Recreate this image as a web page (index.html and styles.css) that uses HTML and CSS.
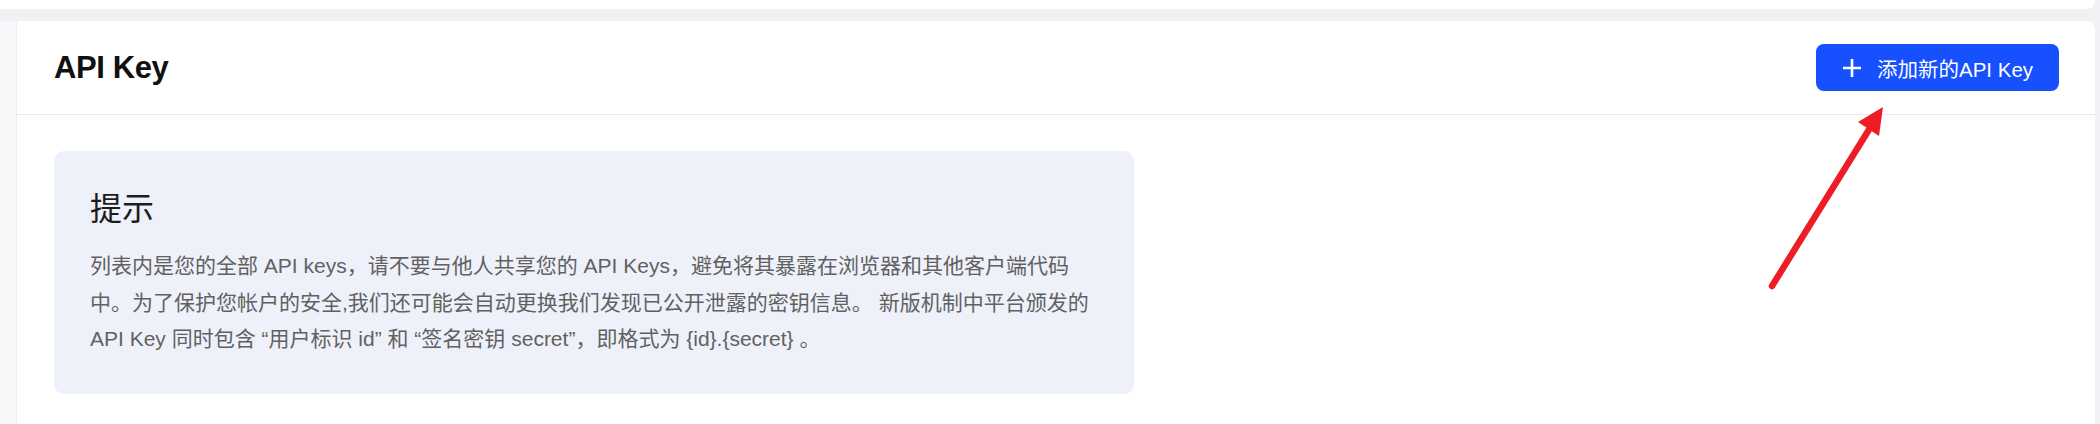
FILE: index.html
```html
<!DOCTYPE html>
<html lang="zh-CN">
<head>
  <meta charset="UTF-8" />
  <meta name="viewport" content="width=device-width, initial-scale=1.0"/>
  <title>API Key</title>
  <link rel="stylesheet" href="styles.css">
</head>
<body>
  <div class="topbar"></div>
  <div class="layout">
    <aside class="sidebar"></aside>
    <main class="card">
      <header class="card-head">
        <h1 class="title">API Key</h1>
        <button class="add-btn" type="button">
          <svg class="plus" viewBox="0 0 18 18" width="18" height="18">
            <path d="M9 0v18M0 9h18" stroke="#fff" stroke-width="2.6" fill="none"/>
          </svg>
          <span>添加新的API Key</span>
        </button>
      </header>
      <section class="card-body">
        <div class="tip">
          <h2 class="tip-title">提示</h2>
          <p class="tip-text">列表内是您的全部 API keys，请不要与他人共享您的 API Keys，避免将其暴露在浏览器和其他客户端代码中。为了保护您帐户的安全,我们还可能会自动更换我们发现已公开泄露的密钥信息。 新版机制中平台颁发的 API Key 同时包含 “用户标识 id” 和 “签名密钥 secret”，即格式为 {id}.{secret} 。</p>
        </div>
      </section>
    </main>
  </div>
  <svg class="arrow" viewBox="0 0 140 200" width="140" height="200">
    <line x1="12" y1="191" x2="110" y2="33" stroke="#ee1d25" stroke-width="6.5" stroke-linecap="round"/>
    <polygon points="123,12 98,27 119,41" fill="#ee1d25"/>
  </svg>
</body>
</html>
```

FILE: styles.css
```css
body {
  margin: 0;
  background-color: #f0f1f5;
  font-family: "Liberation Sans", "Noto Sans CJK SC", sans-serif;
  height: 424px;
  overflow: hidden;
  position: relative;
}
.topbar {
  height: 9px;
  margin-right: 5px;
  background-color: #fff;
  border-radius: 0 0 8px 0;
}
.layout {
  display: flex;
  margin-top: 12px;
  margin-right: 5px;
  height: 403px;
}
.sidebar {
  width: 16px;
  background-color: #f7f8fa;
  border-right: 1px solid #eceef2;
}
.card {
  flex: 1;
  background-color: #fff;
  border-radius: 0 8px 0 0;
}
.card-head {
  height: 93px;
  border-bottom: 1px solid #e8e9ed;
  display: flex;
  align-items: center;
  justify-content: space-between;
  padding: 0 36px 0 37px;
}
.title {
  margin: 0;
  font-size: 31px;
  font-weight: bold;
  letter-spacing: -0.4px;
  color: #111;
}
.add-btn {
  height: 47px;
  width: 243px;
  border: none;
  border-radius: 8px;
  background-color: #1650ff;
  color: #fff;
  display: flex;
  align-items: center;
  gap: 16px;
  padding: 0 0 0 27px;
  font-family: "Liberation Sans", "Noto Sans CJK SC", sans-serif;
  font-size: 20.5px;
  cursor: pointer;
}
.plus {
  flex-shrink: 0;
}
.card-body {
  padding: 36px 37px;
}
.tip {
  width: 1080px;
  box-sizing: border-box;
  background-color: #eef1fa;
  border-radius: 10px;
  padding: 36px 30px 36px 36px;
}
.tip-title {
  margin: 0 0 17px;
  font-size: 32px;
  font-weight: normal;
  line-height: 44px;
  color: #1c1c1c;
}
.tip-text {
  margin: 0;
  font-size: 21px;
  line-height: 36.6px;
  color: #616161;
}
.arrow {
  position: absolute;
  left: 1760px;
  top: 95px;
}
```
